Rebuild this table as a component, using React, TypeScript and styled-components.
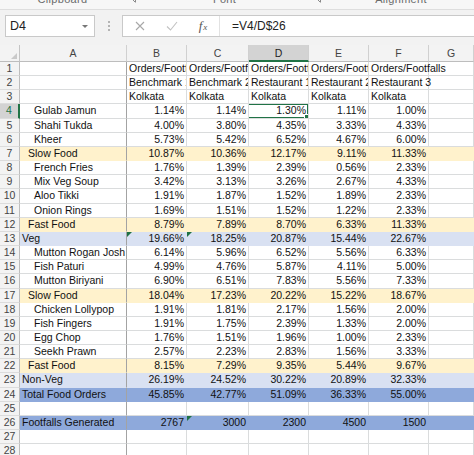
import React from "react";
import styled, { createGlobalStyle } from "styled-components";

const GlobalStyle = createGlobalStyle`
  html, body { margin: 0; padding: 0; background: #ffffff; overflow: hidden; }
  body { font-family: "Liberation Sans", Arial, sans-serif; }
`;

const Window = styled.div`
  width: 474px;
  height: 455px;
  overflow: hidden;
  display: flex;
  flex-direction: column;
  background: #ffffff;
`;

/* ---------- ribbon strip (group labels, cut off) ---------- */
const Ribbon = styled.div`
  height: 9px;
  flex: none;
  display: flex;
  align-items: flex-start;
  background: #f7f7f7;
  border-bottom: 1px solid #dedede;
  overflow: hidden;
`;

const RibbonGroup = styled.div<{ $w: number }>`
  width: ${(p) => p.$w}px;
  flex: none;
  display: flex;
  justify-content: center;
  font-size: 11px;
  line-height: 12px;
  color: #6b6b6b;
  margin-top: -7px;
  letter-spacing: 0.3px;
`;

const Launcher = styled.div<{ $w: number }>`
  width: ${(p) => p.$w}px;
  flex: none;
  display: flex;
  justify-content: center;
  margin-top: -3px;
`;

/* ---------- formula bar ---------- */
const FormulaBar = styled.div`
  height: 35px;
  flex: none;
  box-sizing: border-box;
  display: flex;
  align-items: flex-start;
  padding: 5px 0 0 5px;
  background: #f2f2f2;
`;

const NameBox = styled.div`
  width: 90px;
  height: 22px;
  box-sizing: border-box;
  flex: none;
  display: flex;
  align-items: center;
  justify-content: space-between;
  padding: 0 6px 0 4px;
  background: #ffffff;
  border: 1px solid #c9c9c9;
  font-size: 12.5px;
  color: #222;
`;

const DropArrow = styled.span`
  width: 0;
  height: 0;
  border-left: 3px solid transparent;
  border-right: 3px solid transparent;
  border-top: 3px solid #777;
`;

const Grip = styled.div`
  width: 27px;
  height: 22px;
  flex: none;
  display: flex;
  flex-direction: column;
  align-items: center;
  justify-content: center;
  gap: 2px;
`;

const GripDot = styled.span`
  width: 2px;
  height: 2px;
  background: #b4b4b4;
`;

const FormulaBox = styled.div`
  flex: 1;
  height: 22px;
  box-sizing: border-box;
  display: flex;
  align-items: center;
  background: #ffffff;
  border: 1px solid #c9c9c9;
  border-right: none;
`;

const IconSlot = styled.div<{ $w: number }>`
  width: ${(p) => p.$w}px;
  height: 100%;
  flex: none;
  display: flex;
  align-items: center;
  justify-content: center;
  color: #9a9a9a;
`;

const Fx = styled.span`
  font-family: "Liberation Serif", "Times New Roman", serif;
  font-style: italic;
  font-size: 13px;
  color: #555;
  & small { font-size: 9px; margin-left: 1px; }
`;

const FormulaDivider = styled.span`
  width: 1px;
  height: 100%;
  background: #e2e2e2;
  flex: none;
`;

const FormulaText = styled.div`
  padding-left: 12px;
  font-size: 12px;
  color: #222;
  white-space: nowrap;
`;

/* ---------- sheet grid ---------- */
const Sheet = styled.div`
  flex: none;
  display: grid;
  grid-template-columns: 20px 107px 60px 62px 60px 60px 60px 1fr;
  grid-template-rows: 17px;
  grid-auto-rows: 14.17px;
  font-size: 10.5px;
`;

const Corner = styled.div`
  position: relative;
  box-sizing: border-box;
  background: #f3f3f3;
  border-right: 1px solid #c4c4c4;
  border-bottom: 1px solid #bdbdbd;
  &::after {
    content: "";
    position: absolute;
    right: 2px;
    bottom: 2px;
    width: 0;
    height: 0;
    border-left: 6px solid transparent;
    border-bottom: 6px solid #c9c9c9;
  }
`;

const ColHead = styled.div<{ $sel?: boolean }>`
  box-sizing: border-box;
  background: ${(p) => (p.$sel ? "#d3d3d3" : "#f3f3f3")};
  border-right: 1px solid #d0d0d0;
  border-bottom: ${(p) => (p.$sel ? "2px solid #217346" : "1px solid #bdbdbd")};
  text-align: center;
  line-height: 16px;
  color: ${(p) => (p.$sel ? "#1f1f1f" : "#444")};
`;

const RowHead = styled.div<{ $sel?: boolean }>`
  box-sizing: border-box;
  background: ${(p) => (p.$sel ? "#d3d3d3" : "#f3f3f3")};
  border-right: ${(p) => (p.$sel ? "2px solid #217346" : "1px solid #bdbdbd")};
  border-bottom: 1px solid #dcdcdc;
  text-align: center;
  line-height: 13px;
  color: ${(p) => (p.$sel ? "#217346" : "#444")};
  overflow: hidden;
`;

const Cell = styled.div<{
  $fill?: string;
  $right?: boolean;
  $indent?: number;
  $spill?: boolean;
  $frozen?: boolean;
}>`
  position: relative;
  box-sizing: border-box;
  min-width: 0;
  background: ${(p) => p.$fill ?? "transparent"};
  border-right: 1px solid ${(p) => (p.$frozen ? "#a3a3a3" : p.$fill ?? "#dadcdd")};
  border-bottom: 1px solid ${(p) => p.$fill ?? "#dadcdd"};
  padding: 0 2px 0 ${(p) => p.$indent ?? 2}px;
  text-align: ${(p) => (p.$right ? "right" : "left")};
  line-height: 13px;
  color: #111;
  white-space: nowrap;
  overflow: ${(p) => (p.$spill ? "visible" : "hidden")};
  z-index: ${(p) => (p.$spill ? 1 : "auto")};
`;

const Flag = styled.span`
  position: absolute;
  left: 0;
  top: 0;
  width: 0;
  height: 0;
  border-top: 5px solid #1e7145;
  border-right: 5px solid transparent;
`;

const Selection = styled.span`
  position: absolute;
  left: -2px;
  top: -1px;
  right: -1px;
  bottom: -1px;
  border: 2px solid #217346;
  z-index: 2;
  pointer-events: none;
  &::after {
    content: "";
    position: absolute;
    right: -4px;
    bottom: -4px;
    width: 5px;
    height: 5px;
    background: #217346;
    border: 1px solid #ffffff;
  }
`;

/* ---------- data ---------- */
const YELLOW = "#fff2cc";
const LBLUE = "#d9e1f2";
const DBLUE = "#8ea9db";

type RowData = {
  label?: string;
  indent?: number;
  fill?: string;
  values: string[];
  text?: boolean;
  flags?: number[];
};

const rows: RowData[] = [
  { values: Array(5).fill("Orders/Footfalls"), text: true },
  { values: ["Benchmark 1", "Benchmark 2", "Restaurant 1", "Restaurant 2", "Restaurant 3"], text: true },
  { values: Array(5).fill("Kolkata"), text: true },
  { label: "Gulab Jamun", indent: 14, values: ["1.14%", "1.14%", "1.30%", "1.11%", "1.00%"] },
  { label: "Shahi Tukda", indent: 14, values: ["4.00%", "3.80%", "4.35%", "3.33%", "4.33%"] },
  { label: "Kheer", indent: 14, values: ["5.73%", "5.42%", "6.52%", "4.67%", "6.00%"] },
  { label: "Slow Food", indent: 8, fill: YELLOW, values: ["10.87%", "10.36%", "12.17%", "9.11%", "11.33%"] },
  { label: "French Fries", indent: 14, values: ["1.76%", "1.39%", "2.39%", "0.56%", "2.33%"] },
  { label: "Mix Veg Soup", indent: 14, values: ["3.42%", "3.13%", "3.26%", "2.67%", "4.33%"] },
  { label: "Aloo Tikki", indent: 14, values: ["1.91%", "1.87%", "1.52%", "1.89%", "2.33%"] },
  { label: "Onion Rings", indent: 14, values: ["1.69%", "1.51%", "1.52%", "1.22%", "2.33%"] },
  { label: "Fast Food", indent: 8, fill: YELLOW, values: ["8.79%", "7.89%", "8.70%", "6.33%", "11.33%"] },
  { label: "Veg", indent: 2, fill: LBLUE, values: ["19.66%", "18.25%", "20.87%", "15.44%", "22.67%"], flags: [0, 1] },
  { label: "Mutton Rogan Josh", indent: 14, values: ["6.14%", "5.96%", "6.52%", "5.56%", "6.33%"] },
  { label: "Fish Paturi", indent: 14, values: ["4.99%", "4.76%", "5.87%", "4.11%", "5.00%"] },
  { label: "Mutton Biriyani", indent: 14, values: ["6.90%", "6.51%", "7.83%", "5.56%", "7.33%"] },
  { label: "Slow Food", indent: 8, fill: YELLOW, values: ["18.04%", "17.23%", "20.22%", "15.22%", "18.67%"] },
  { label: "Chicken Lollypop", indent: 14, values: ["1.91%", "1.81%", "2.17%", "1.56%", "2.00%"] },
  { label: "Fish Fingers", indent: 14, values: ["1.91%", "1.75%", "2.39%", "1.33%", "2.00%"] },
  { label: "Egg Chop", indent: 14, values: ["1.76%", "1.51%", "1.96%", "1.00%", "2.33%"] },
  { label: "Seekh Prawn", indent: 14, values: ["2.57%", "2.23%", "2.83%", "1.56%", "3.33%"] },
  { label: "Fast Food", indent: 8, fill: YELLOW, values: ["8.15%", "7.29%", "9.35%", "5.44%", "9.67%"] },
  { label: "Non-Veg", indent: 2, fill: LBLUE, values: ["26.19%", "24.52%", "30.22%", "20.89%", "32.33%"] },
  { label: "Total Food Orders", indent: 2, fill: DBLUE, values: ["45.85%", "42.77%", "51.09%", "36.33%", "55.00%"] },
  { values: ["", "", "", "", ""] },
  { label: "Footfalls Generated", indent: 2, fill: DBLUE, values: ["2767", "3000", "2300", "4500", "1500"], flags: [1] },
  { values: ["", "", "", "", ""] },
  { values: ["", "", "", "", ""] },
];

const COLS = ["A", "B", "C", "D", "E", "F", "G"];

const XIcon = () => (
  <svg width="10" height="10" viewBox="0 0 10 10">
    <path d="M1 1 L9 9 M9 1 L1 9" stroke="#a8a8a8" strokeWidth="1.1" fill="none" />
  </svg>
);

const CheckIcon = () => (
  <svg width="12" height="10" viewBox="0 0 12 10">
    <path d="M1 5.5 L4.5 9 L11 1" stroke="#c2c2c2" strokeWidth="1.1" fill="none" />
  </svg>
);

const LauncherIcon = () => (
  <svg width="6" height="6" viewBox="0 0 6 6">
    <path d="M0.5 0.5 H5.5 V5.5 M1.5 1.5 L5 5" stroke="#8a8a8a" strokeWidth="1" fill="none" />
  </svg>
);

export default function App() {
  return (
    <Window>
      <GlobalStyle />
      <Ribbon>
        <RibbonGroup $w={125}>Clipboard</RibbonGroup>
        <Launcher $w={16}>
          <LauncherIcon />
        </Launcher>
        <RibbonGroup $w={167}>Font</RibbonGroup>
        <Launcher $w={20}>
          <LauncherIcon />
        </Launcher>
        <RibbonGroup $w={146}>Alignment</RibbonGroup>
      </Ribbon>

      <FormulaBar>
        <NameBox>
          <span>D4</span>
          <DropArrow />
        </NameBox>
        <Grip>
          <GripDot />
          <GripDot />
          <GripDot />
        </Grip>
        <FormulaBox>
          <IconSlot $w={34}>
            <XIcon />
          </IconSlot>
          <IconSlot $w={30}>
            <CheckIcon />
          </IconSlot>
          <IconSlot $w={32}>
            <Fx>
              f<small>x</small>
            </Fx>
          </IconSlot>
          <FormulaDivider />
          <FormulaText>=V4/D$26</FormulaText>
        </FormulaBox>
      </FormulaBar>

      <Sheet>
        <Corner />
        {COLS.map((c) => (
          <ColHead key={c} $sel={c === "D"}>
            {c}
          </ColHead>
        ))}
        {rows.map((r, i) => {
          const n = i + 1;
          return (
            <React.Fragment key={n}>
              <RowHead $sel={n === 4}>{n}</RowHead>
              <Cell $fill={r.fill} $indent={r.indent} $frozen>
                {r.label}
              </Cell>
              {r.values.map((v, j) => (
                <Cell
                  key={j}
                  $fill={r.fill}
                  $right={!r.text}
                  $spill={r.text && j === 4}
                >
                  {r.flags?.includes(j) && <Flag />}
                  {n === 4 && j === 2 && <Selection />}
                  {v}
                </Cell>
              ))}
              <Cell $fill={r.fill} />
            </React.Fragment>
          );
        })}
      </Sheet>
    </Window>
  );
}
